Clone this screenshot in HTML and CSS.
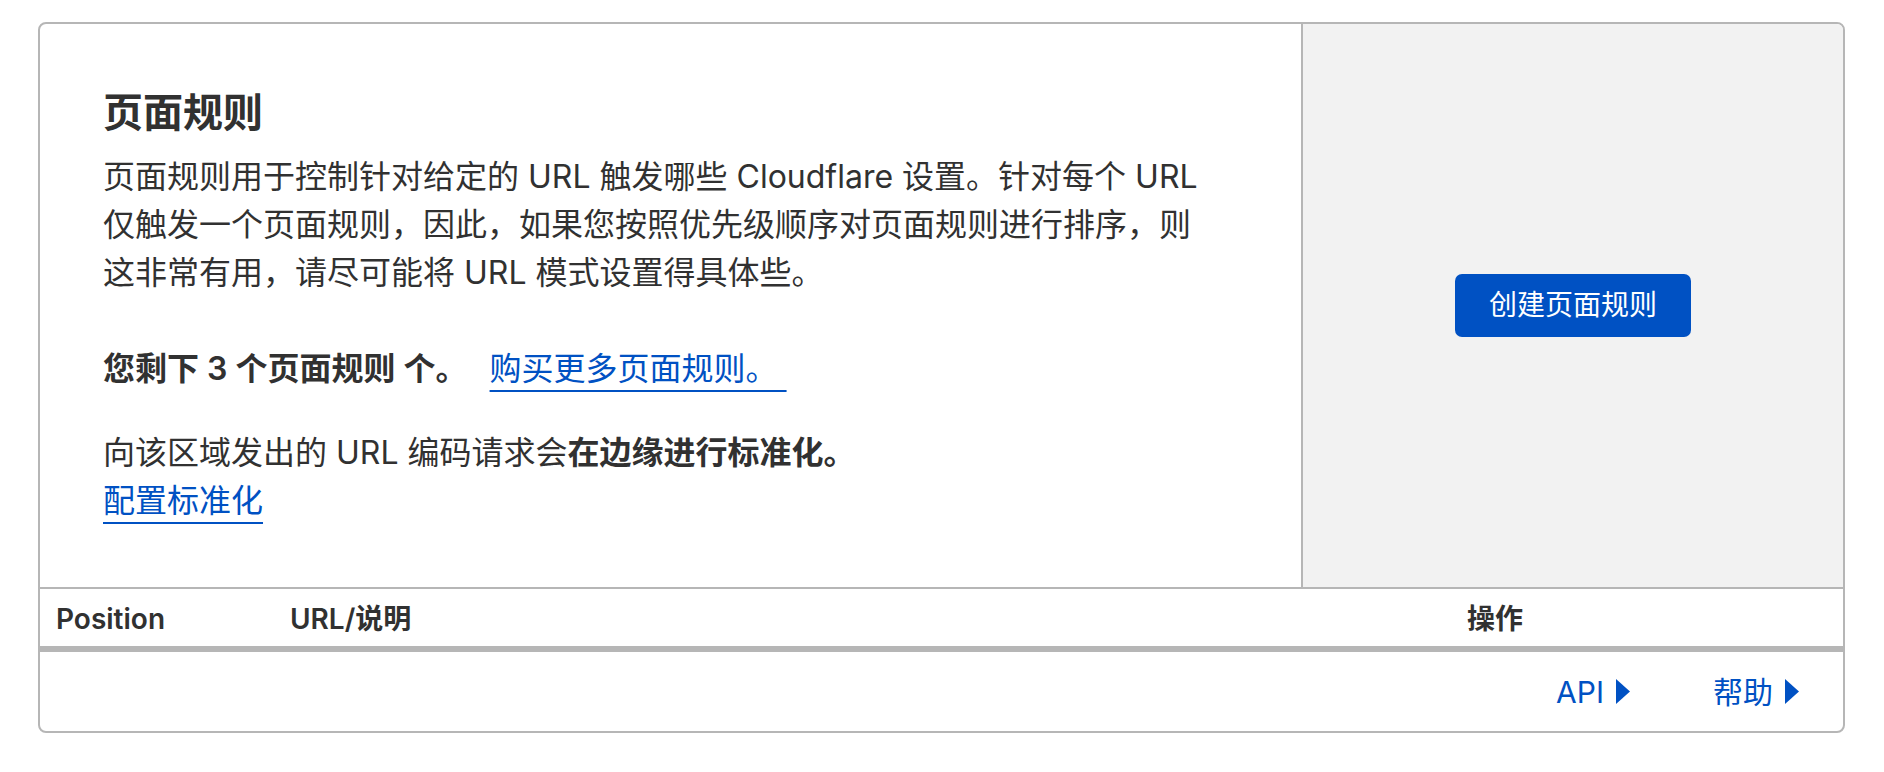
FILE: index.html
```html
<!DOCTYPE html>
<html lang="zh-CN">
<head>
<meta charset="utf-8">
<title>页面规则</title>
<link rel="stylesheet" href="styles.css">
</head>
<body>
<div class="page">
  <section class="card">
    <div class="card-top">
      <div class="intro">
        <h2 class="title">页面规则</h2>
        <p class="desc">页面规则用于控制针对给定的 URL 触发哪些 Cloudflare 设置。针对每个 URL<br>仅触发一个页面规则，因此，如果您按照优先级顺序对页面规则进行排序，则<br>这非常有用，请尽可能将 URL 模式设置得具体些。</p>
        <p class="quota"><strong>您剩下 3 个页面规则 个。</strong><a class="link quota-link" href="#">购买更多页面规则。&nbsp;</a></p>
        <p class="normalize">向该区域发出的 URL 编码请求会<strong>在边缘进行标准化。</strong><br><a class="link" href="#">配置标准化</a></p>
      </div>
      <div class="action">
        <button class="btn-primary" type="button">创建页面规则</button>
      </div>
    </div>
    <div class="table-head">
      <div class="th">Position</div>
      <div class="th">URL/说明</div>
      <div class="th">操作</div>
    </div>
    <div class="table-foot">
      <a class="foot-link" href="#">API<svg class="caret" viewBox="0 0 14 25" aria-hidden="true"><polygon points="0,0 14,12.5 0,25"/></svg></a>
      <a class="foot-link" href="#">帮助<svg class="caret" viewBox="0 0 14 25" aria-hidden="true"><polygon points="0,0 14,12.5 0,25"/></svg></a>
    </div>
  </section>
</div>
</body>
</html>
```

FILE: styles.css
```css
* {
  box-sizing: border-box;
}

html, body {
  margin: 0;
  padding: 0;
  background: #ffffff;
}

body {
  font-family: "Inter", "Noto Sans CJK SC", sans-serif;
  color: #313131;
  font-size: 32px;
  line-height: 48px;
}

.page {
  padding: 22px 39px 0 38px;
}

.card {
  border: 2px solid #b6b6b6;
  border-radius: 8px;
  overflow: hidden;
  background: #ffffff;
}

.card-top {
  display: grid;
  grid-template-columns: 1fr 540px;
}

.intro {
  padding: 65px 64px 62px 63px;
  border-right: 2px solid #b6b6b6;
}

.title {
  margin: 0 0 16px;
  font-size: 40px;
  line-height: 48px;
  font-weight: 600;
  color: #313131;
}

.desc {
  margin: 0;
}

.quota {
  margin: 48px 0 0;
}

.quota strong,
.normalize strong {
  font-weight: 600;
}

.quota-link {
  margin-left: 22px;
}

.normalize {
  margin: 36px 0 0;
}

.link {
  color: #0051c3;
  text-decoration: underline;
  text-decoration-thickness: 2px;
  text-underline-offset: 10px;
}

.action {
  background: #f2f2f2;
  display: flex;
  align-items: center;
  justify-content: center;
}

.btn-primary {
  font-family: "Inter", "Noto Sans CJK SC", sans-serif;
  font-size: 28px;
  line-height: 63px;
  height: 63px;
  padding: 0 34px;
  border: none;
  border-radius: 7px;
  background: #0051c3;
  color: #ffffff;
  cursor: pointer;
}

.table-head {
  display: grid;
  grid-template-columns: 234px 1177px 1fr;
  border-top: 2px solid #b6b6b6;
  border-bottom: 6px solid #b6b6b6;
}

.th {
  padding: 10px 16px 6px;
  font-size: 28px;
  line-height: 41px;
  font-weight: 600;
  color: #313131;
}

.table-foot {
  display: flex;
  justify-content: flex-end;
  align-items: center;
  gap: 83px;
  height: 79px;
  padding-right: 44px;
}

.foot-link {
  display: inline-flex;
  align-items: center;
  gap: 12px;
  color: #0051c3;
  text-decoration: none;
  font-size: 30px;
  line-height: 40px;
}

.caret {
  width: 14px;
  height: 25px;
  fill: #0051c3;
}
```
